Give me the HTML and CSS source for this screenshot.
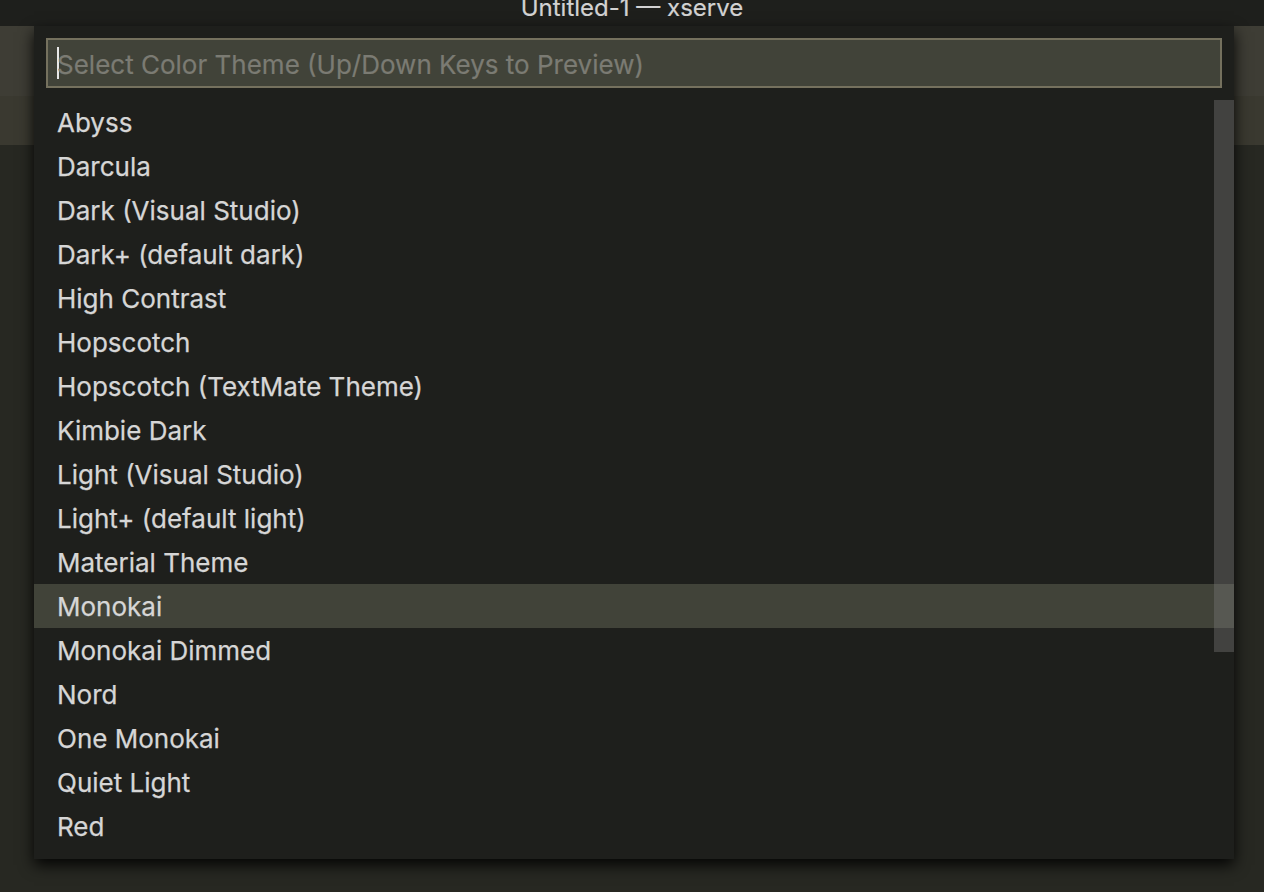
FILE: index.html
```html
<!DOCTYPE html>
<html lang="en">
<head>
  <meta charset="UTF-8">
  <link rel="stylesheet" href="styles.css">
</head>
<body>
  <div class="titlebar">
    <span class="title">Untitled-1 — xserve</span>
  </div>
  <div class="tabs"></div>
  <div class="breadcrumbs"></div>
  <div class="editor"></div>

  <!-- Quick pick -->
  <div class="quick-pick">
    <div class="quick-input">
      <span class="cursor"></span>
      <span class="placeholder">Select Color Theme (Up/Down Keys to Preview)</span>
    </div>
    <div class="quick-list">
      <div class="item">Abyss</div>
      <div class="item">Darcula</div>
      <div class="item">Dark (Visual Studio)</div>
      <div class="item">Dark+ (default dark)</div>
      <div class="item">High Contrast</div>
      <div class="item">Hopscotch</div>
      <div class="item">Hopscotch (TextMate Theme)</div>
      <div class="item">Kimbie Dark</div>
      <div class="item">Light (Visual Studio)</div>
      <div class="item">Light+ (default light)</div>
      <div class="item">Material Theme</div>
      <div class="item selected">Monokai</div>
      <div class="item">Monokai Dimmed</div>
      <div class="item">Nord</div>
      <div class="item">One Monokai</div>
      <div class="item">Quiet Light</div>
      <div class="item">Red</div>
      <div class="scrollbar"></div>
    </div>
  </div>
</body>
</html>
```

FILE: styles.css
```css
html, body {
  margin: 0;
  padding: 0;
}

body {
  background: #272822;
  font-family: Inter, "Noto Sans", sans-serif;
  height: 892px;
  overflow: hidden;
  position: relative;
}

.titlebar {
  height: 26px;
  background: #1e1f1c;
  text-align: center;
  overflow: hidden;
}

.title {
  display: inline-block;
  color: #d2d2d2;
  font-size: 24px;
  line-height: 24px;
  margin-top: -8px;
  -webkit-text-stroke: 0.2px #d2d2d2;
}

.tabs {
  height: 70px;
  background: #3e3d35;
}

.breadcrumbs {
  height: 49px;
  background: #3a3930;
}

.quick-pick {
  position: absolute;
  left: 34px;
  top: 26px;
  width: 1200px;
  background: #1e1f1c;
  box-shadow: 0 6px 14px rgba(0, 0, 0, 0.9);
  padding: 12px 0 11px;
}

.quick-input {
  margin: 0 12px 12px;
  height: 46px;
  border: 2px solid #75715e;
  background: #414339;
  display: flex;
  align-items: center;
  padding-left: 9px;
}

.cursor {
  width: 2px;
  height: 32px;
  background: #e8e8e8;
  margin-right: -2px;
}

.placeholder {
  color: #7b7b73;
  font-size: 26px;
  padding-top: 2px;
  -webkit-text-stroke: 0.2px #7b7b73;
}

.quick-list {
  position: relative;
}

.item {
  height: 44px;
  line-height: 46px;
  overflow: hidden;
  padding-left: 23px;
  color: #d6d6d6;
  font-size: 26px;
  -webkit-text-stroke: 0.25px #d6d6d6;
}

.item.selected {
  background: #414339;
}

.scrollbar {
  position: absolute;
  right: 0;
  top: 0;
  width: 20px;
  height: 552px;
  background: rgba(121, 121, 121, 0.4);
}
```
